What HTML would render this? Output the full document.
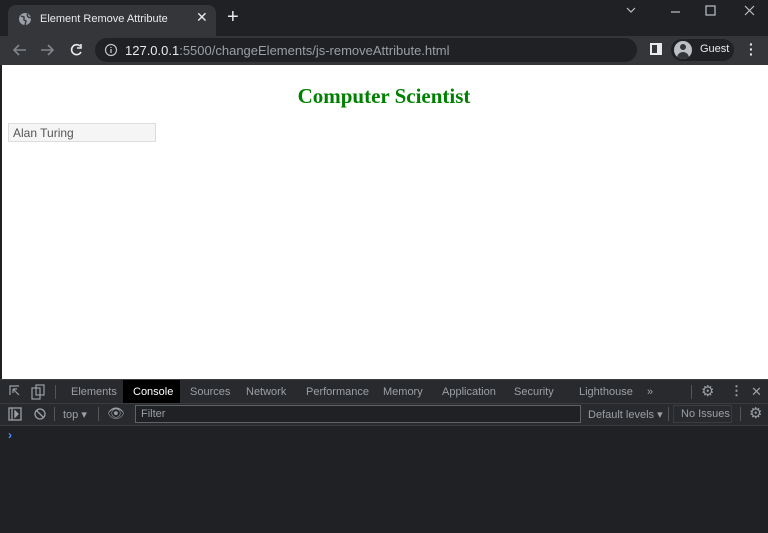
<!DOCTYPE html><html><head><style>
*{margin:0;padding:0;box-sizing:border-box}
body{width:768px;height:533px;overflow:hidden;background:#202124;font-family:"Liberation Sans",sans-serif;position:relative}
.a{position:absolute}
.t{color:#e8eaed;font-size:11px}
.dt{color:#9aa0a6;font-size:11px;position:absolute;top:386px}
</style></head><body>
<div class="a" style="left:0;top:0;width:768px;height:36px;background:#202124"></div>
<div class="a" style="left:8px;top:5px;width:208px;height:32px;background:#35363a;border-radius:8px 8px 0 0"></div>
<svg class="a" style="left:18px;top:12px" width="14" height="14"><circle cx="7" cy="7" r="6" fill="#9aa0a6"/><path d="M3 4l3 1 0 3 2 1 -1 4M9 2l1 3 3 1" stroke="#35363a" stroke-width="1.4" fill="none"/></svg>
<div class="a t" style="left:40px;top:13px;font-size:11px">Element Remove Attribute</div>
<div class="a" style="left:196px;top:9px;color:#e8eaed;font-size:14px">✕</div>
<div class="a" style="left:227px;top:6px;color:#e8eaed;font-size:20px">+</div>
<svg class="a" style="left:625px;top:5px" width="140" height="14" stroke="#bdc1c6" fill="none" stroke-width="1.2"><path d="M2 3l4 4 4-4"/><path d="M46 7h9"/><rect x="81" y="1" width="9" height="9"/><path d="M120 1l9 9M129 1l-9 9"/></svg>
<div class="a" style="left:0;top:36px;width:768px;height:29px;background:#35363a"></div>
<svg class="a" style="left:12px;top:42px" width="80" height="16" stroke="#9aa0a6" stroke-width="1.6" fill="none"><path d="M14 8H3M7 3L2 8l5 5" stroke="#80868b"/><path d="M29 8h11M36 3l5 5-5 5" stroke="#80868b"/><path d="M68 4a5 5 0 1 0 1 6" stroke="#e8eaed"/><path d="M69 2v4h-4" stroke="#e8eaed"/></svg>
<div class="a" style="left:95px;top:38px;width:542px;height:24px;background:#202124;border-radius:12px"></div>
<svg class="a" style="left:104px;top:43px" width="14" height="14"><circle cx="7" cy="7" r="5.5" stroke="#bdc1c6" fill="none" stroke-width="1.2"/><path d="M7 6v4M7 4v1" stroke="#bdc1c6" stroke-width="1.3"/></svg>
<div class="a" style="left:125px;top:43px;font-size:13px;color:#9aa0a6"><span style="color:#e8eaed">127.0.0.1</span>:5500/changeElements/js-removeAttribute.html</div>
<div class="a" style="left:650px;top:43px;width:12px;height:12px;border:2px solid #e8eaed;border-right-width:5px"></div>
<div class="a" style="left:671px;top:39px;width:63px;height:22px;background:#202124;border-radius:11px"></div>
<div class="a" style="left:674px;top:41px;width:18px;height:18px;border-radius:50%;background:#bdc1c6;overflow:hidden"><div class="a" style="left:6px;top:3px;width:6px;height:6px;border-radius:50%;background:#35363a"></div><div class="a" style="left:3px;top:11px;width:12px;height:8px;border-radius:6px 6px 0 0;background:#35363a"></div></div>
<div class="a t" style="left:700px;top:43px;font-size:11px">Guest</div>
<div class="a" style="left:749px;top:42px;color:#e8eaed;font-size:14px;line-height:5px;font-weight:bold">·<br>·<br>·</div>
<div class="a" style="left:2px;top:65px;width:766px;height:314px;background:#fff"></div>
<div class="a" style="left:0;top:84px;width:768px;text-align:center;font-family:'Liberation Serif',serif;font-weight:bold;font-size:21px;color:#008000">Computer Scientist</div>
<div class="a" style="left:8px;top:123px;width:148px;height:19px;background:#f5f5f5;border:1px solid #ddd;font-size:12px;color:#555;padding:2px 4px">Alan Turing</div>
<div class="a" style="left:0;top:379px;width:768px;height:24px;background:#292a2d;border-top:1px solid #3c3c3c"></div>
<div class="a" style="left:123px;top:380px;width:57px;height:23px;background:#000"></div>
<svg class="a" style="left:8px;top:384px" width="40" height="16" stroke="#9aa0a6" fill="none" stroke-width="1.2"><path d="M2 11V2h9M5 5l6 6M5 5h4M5 5v4"/><rect x="24" y="4" width="8" height="11"/><rect x="28" y="1" width="8" height="10"/></svg>
<div class="a" style="left:55px;top:385px;width:1px;height:14px;background:#555"></div>
<div class="dt" style="left:71px">Elements</div>
<div class="dt" style="left:133px;color:#fff">Console</div>
<div class="dt" style="left:190px">Sources</div>
<div class="dt" style="left:246px">Network</div>
<div class="dt" style="left:306px">Performance</div>
<div class="dt" style="left:383px">Memory</div>
<div class="dt" style="left:442px">Application</div>
<div class="dt" style="left:514px">Security</div>
<div class="dt" style="left:579px">Lighthouse</div>
<div class="dt" style="left:647px">»</div>
<div class="a" style="left:691px;top:385px;width:1px;height:14px;background:#555"></div>
<div class="dt" style="left:701px;font-size:15px;top:382px">⚙</div>
<div class="dt" style="left:730px;font-size:13px;font-weight:bold;top:383px">⋮</div>
<div class="dt" style="left:751px;font-size:13px;top:384px">✕</div>
<div class="a" style="left:0;top:403px;width:768px;height:23px;background:#292a2d;border-top:1px solid #3c3c3c;border-bottom:1px solid #3c3c3c"></div>
<svg class="a" style="left:8px;top:407px" width="40" height="14" stroke="#9aa0a6" fill="none" stroke-width="1.3"><rect x="1" y="1" width="12" height="12"/><path d="M4 1v12M7 4l3 3-3 3z" fill="#9aa0a6"/><circle cx="32" cy="7" r="5"/><path d="M28.5 3.5l7 7"/></svg>
<div class="a" style="left:54px;top:407px;width:1px;height:14px;background:#555"></div>
<div class="dt" style="left:63px;top:408px">top ▾</div>
<div class="a" style="left:98px;top:407px;width:1px;height:14px;background:#555"></div>
<div class="dt" style="left:107px;top:405px;font-size:14px">👁</div>
<div class="a" style="left:135px;top:405px;width:446px;height:18px;background:#202124;border:1px solid #5f6368"></div>
<div class="dt" style="left:141px;top:408px">Filter</div>
<div class="dt" style="left:588px;top:408px">Default levels ▾</div>
<div class="a" style="left:668px;top:407px;width:1px;height:14px;background:#555"></div>
<div class="a" style="left:673px;top:405px;width:59px;height:18px;border:1px solid #3c3c3c"></div>
<div class="dt" style="left:681px;top:408px">No Issues</div>
<div class="a" style="left:740px;top:407px;width:1px;height:14px;background:#555"></div>
<div class="dt" style="left:749px;top:404px;font-size:15px">⚙</div>
<div class="a" style="left:8px;top:428px;color:#4d90fe;font-size:12px;font-weight:bold">›</div>
</body></html>
